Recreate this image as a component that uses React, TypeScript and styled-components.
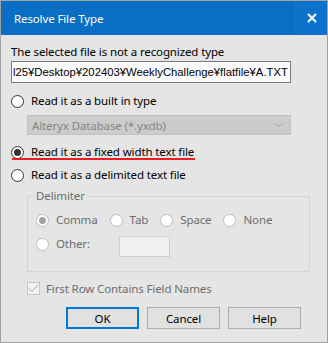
import React from "react";
import styled, { createGlobalStyle } from "styled-components";

const Global = createGlobalStyle`
  html, body { margin: 0; padding: 0; background: #e5e5e5; }
  * { box-sizing: border-box; }
`;

const FONT = `"Noto Sans", "Open Sans", sans-serif`;

const Window = styled.div`
  width: 328px;
  height: 343px;
  border: 1px solid #a3a3a3;
  background: #e5e5e5;
  display: flex;
  flex-direction: column;
  font-family: ${FONT};
  font-size: 11.5px;
  letter-spacing: -0.12px;
  color: #000;
  overflow: hidden;
`;

const TitleBar = styled.div`
  height: 34px;
  flex: none;
  background: #0b6ec5;
  display: flex;
  align-items: center;
  justify-content: space-between;
  color: #fff;
  padding-left: 13px;
`;

const TitleText = styled.span`
  padding-top: 1px;
`;

const CloseButton = styled.div`
  width: 33px;
  height: 100%;
  background: #0c72cc;
  display: flex;
  align-items: center;
  justify-content: center;
  padding-left: 2px;
`;

const Body = styled.div`
  display: flex;
  flex-direction: column;
  padding: 9px 0 0 10px;
`;

const Caption = styled.div`
  height: 16px;
  line-height: 16px;
`;

const PathBox = styled.div`
  margin-top: 1px;
  width: 280px;
  height: 22px;
  border: 1px solid #7a7a7a;
  background: #fbfbfb;
  display: flex;
  align-items: center;
  overflow: hidden;
  padding-left: 1px;
  font-family: "Liberation Sans", Arial, sans-serif;
  font-size: 11.3px;
  letter-spacing: 0;
  white-space: nowrap;
`;

const Row = styled.div<{ $mt: number; $ml?: number }>`
  position: relative;
  margin-top: ${(p) => p.$mt}px;
  margin-left: ${(p) => p.$ml ?? 0}px;
  height: 16px;
  display: flex;
  align-items: center;
`;

const Radio = styled.span<{ $checked?: boolean; $disabled?: boolean }>`
  width: 13px;
  height: 13px;
  flex: none;
  border-radius: 50%;
  border: 1px solid ${(p) => (p.$disabled ? "#bcbcbc" : "#333")};
  background: #fff;
  display: flex;
  align-items: center;
  justify-content: center;
  &::after {
    content: "";
    display: ${(p) => (p.$checked ? "block" : "none")};
    width: 7px;
    height: 7px;
    border-radius: 50%;
    background: ${(p) => (p.$disabled ? "#a3a3a3" : "#333")};
  }
`;

const Label = styled.span<{ $disabled?: boolean }>`
  margin-left: 7px;
  line-height: 16px;
  white-space: nowrap;
  color: ${(p) => (p.$disabled ? "#6d6d6d" : "#000")};
`;

const Underline = styled.div`
  position: absolute;
  left: 1px;
  top: 14px;
  width: 183px;
  height: 2px;
  background: #ec1c24;
`;

const Select = styled.div`
  margin-top: 6px;
  margin-left: 16px;
  width: 264px;
  height: 20px;
  background: #cccccc;
  border: 1px solid #c2c2c2;
  display: flex;
  align-items: center;
  justify-content: space-between;
  padding: 0 6px 0 4px;
  color: #858585;
`;

const Group = styled.fieldset`
  margin: 6px 0 0 16px;
  width: 283px;
  padding: 9px 0 14px 8px;
  border: 1px solid #d5d5d5;
  min-inline-size: 0;
  display: flex;
  flex-direction: column;
  gap: 8px;
`;

const Legend = styled.legend`
  padding: 0 2px;
  margin-left: -2px;
  line-height: 14px;
  color: #6d6d6d;
`;

const GroupRow = styled.div`
  display: flex;
  align-items: flex-start;
  gap: 12px;
`;

const Option = styled.div`
  display: flex;
  align-items: center;
  height: 16px;
`;

const OtherBox = styled.div`
  margin-left: 17px;
  width: 51px;
  height: 21px;
  background: #f0f0f0;
  border: 1px solid #cfcfcf;
`;

const Checkbox = styled.span`
  width: 13px;
  height: 13px;
  flex: none;
  border: 1px solid #c4c4c4;
  background: #f4f4f4;
  display: flex;
  align-items: center;
  justify-content: center;
`;

const CheckLabel = styled.span`
  margin-left: 6px;
  color: #6d6d6d;
  white-space: nowrap;
`;

const ButtonRow = styled.div`
  margin-top: 11px;
  width: 290px;
  display: flex;
  justify-content: flex-end;
  gap: 8px;
`;

const Button = styled.button<{ $primary?: boolean }>`
  width: 73px;
  height: 22px;
  margin: 0;
  padding: 0;
  background: #e1e1e1;
  border: ${(p) => (p.$primary ? "2px solid #0078d7" : "1px solid #adadad")};
  font-family: ${FONT};
  font-size: 11.5px;
  letter-spacing: -0.12px;
  color: #000;
`;

export default function App() {
  return (
    <>
      <Global />
      <Window>
        <TitleBar>
          <TitleText>Resolve File Type</TitleText>
          <CloseButton>
            <svg width="10" height="10" viewBox="0 0 10 10">
              <path d="M1 1 L9 9 M9 1 L1 9" stroke="#fff" strokeWidth="2" />
            </svg>
          </CloseButton>
        </TitleBar>
        <Body>
          <Caption>The selected file is not a recognized type</Caption>
          <PathBox>l25¥Desktop¥202403¥WeeklyChallenge¥flatfile¥A.TXT</PathBox>
          <Row $mt={10}>
            <Radio />
            <Label>Read it as a built in type</Label>
          </Row>
          <Select>
            <span>Alteryx Database (*.yxdb)</span>
            <svg width="10" height="6" viewBox="0 0 10 6">
              <path d="M1 1 L5 5 L9 1" stroke="#a6a6a6" strokeWidth="1" fill="none" />
            </svg>
          </Select>
          <Row $mt={9}>
            <Radio $checked />
            <Label>Read it as a fixed width text file</Label>
            <Underline />
          </Row>
          <Row $mt={7}>
            <Radio />
            <Label>Read it as a delimited text file</Label>
          </Row>
          <Group>
            <Legend>Delimiter</Legend>
            <GroupRow>
              <Option>
                <Radio $checked $disabled />
                <Label $disabled>Comma</Label>
              </Option>
              <Option>
                <Radio $disabled />
                <Label $disabled>Tab</Label>
              </Option>
              <Option>
                <Radio $disabled />
                <Label $disabled>Space</Label>
              </Option>
              <Option>
                <Radio $disabled />
                <Label $disabled>None</Label>
              </Option>
            </GroupRow>
            <GroupRow>
              <Option>
                <Radio $disabled />
                <Label $disabled>Other:</Label>
              </Option>
              <OtherBox />
            </GroupRow>
          </Group>
          <Row $mt={8} $ml={16}>
            <Checkbox>
              <svg width="11" height="9" viewBox="0 0 11 9">
                <path d="M1 4.5 L4 7.5 L10 1" stroke="#c2c2c2" strokeWidth="1.2" fill="none" />
              </svg>
            </Checkbox>
            <CheckLabel>First Row Contains Field Names</CheckLabel>
          </Row>
          <ButtonRow>
            <Button $primary>OK</Button>
            <Button>Cancel</Button>
            <Button>Help</Button>
          </ButtonRow>
        </Body>
      </Window>
    </>
  );
}
